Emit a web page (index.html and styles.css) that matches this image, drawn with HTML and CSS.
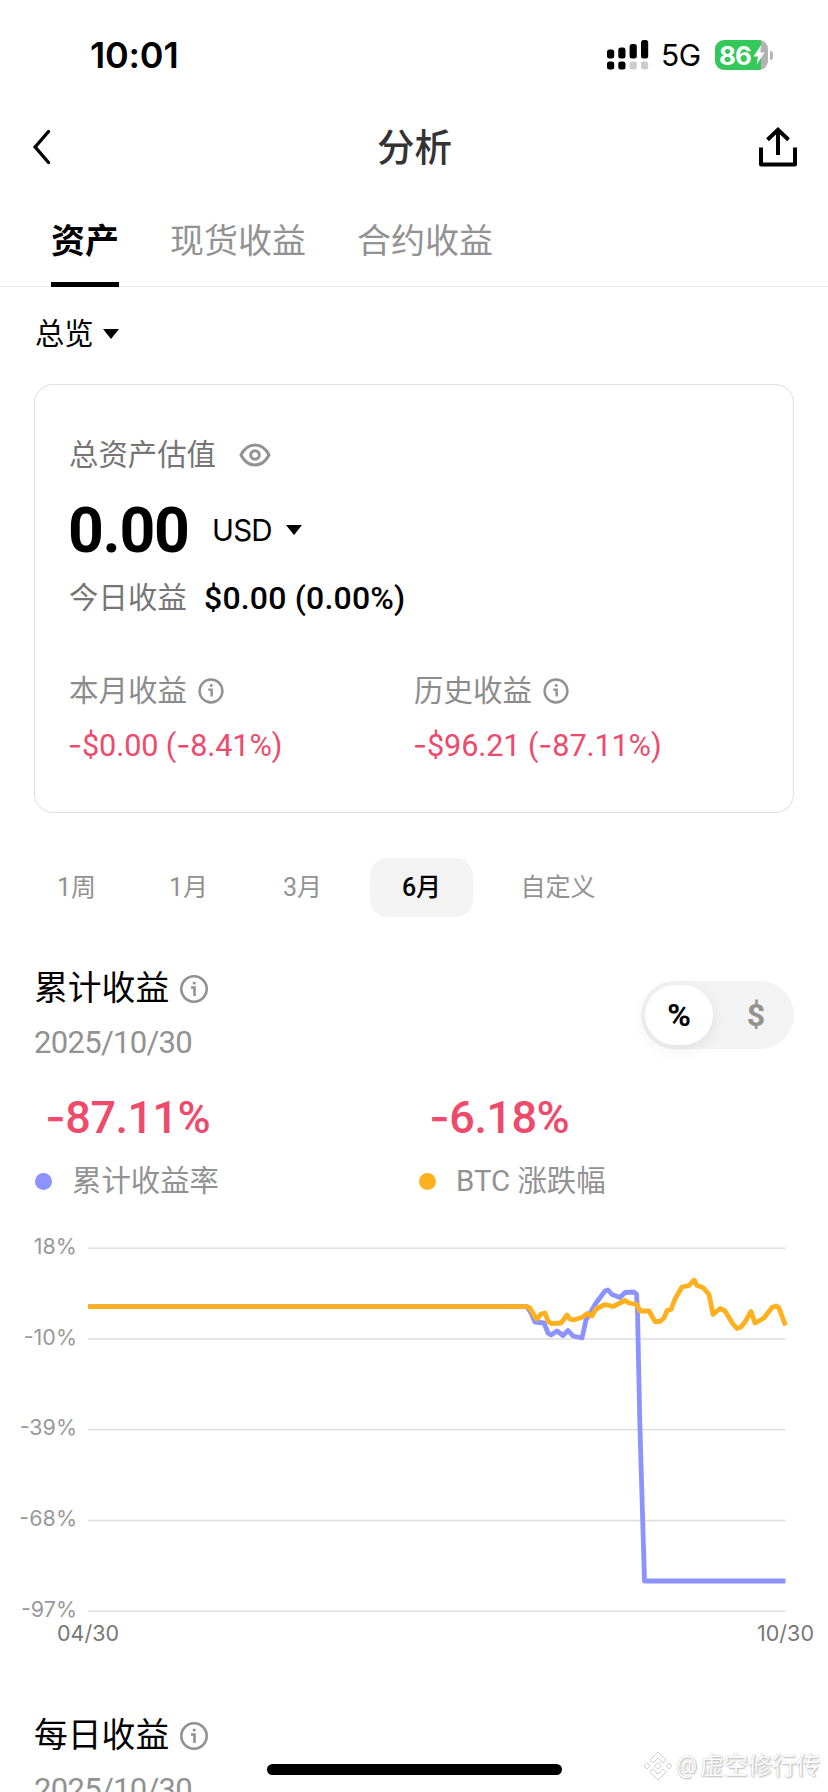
FILE: index.html
```html
<!DOCTYPE html>
<html lang="zh-CN">
<head>
  <meta charset="UTF-8" />
  <meta name="viewport" content="width=device-width, initial-scale=1.0"/>
  <title>分析</title>
  <link rel="stylesheet" href="styles.css">
</head>
<body>

  <!-- Status bar -->
  <div class="status-bar">
    <div class="clock">10:01</div>
    <div class="status-icons">
      <svg class="signal" width="42" height="30" viewBox="0 0 42 30">
        <rect x="0" y="9.5" width="7.2" height="9" rx="2.5"/>
        <rect x="11.3" y="7.5" width="7.2" height="11" rx="2.5"/>
        <rect x="22.6" y="4" width="7.2" height="14.5" rx="2.5"/>
        <rect x="34" y="0" width="7.2" height="18.5" rx="2.5"/>
        <rect x="0" y="21.5" width="7.2" height="8" rx="2.5"/>
        <rect x="11.3" y="21.5" width="7.2" height="8" rx="2.5"/>
        <rect x="22.6" y="21.5" width="7.2" height="8" rx="2.5" fill="#ccc"/>
        <rect x="34" y="21.5" width="7.2" height="8" rx="2.5" fill="#ccc"/>
      </svg>
      <span class="network">5G</span>
      <div class="battery">
        <span>86</span>
        <svg width="12" height="20" viewBox="0 0 12 20"><path d="M8 0 0.5 11.5H5L3.5 20 11.5 7.5H7.5Z" fill="#fff"/></svg>
      </div>
      <div class="battery-cap"></div>
    </div>
  </div>

  <!-- Header -->
  <div class="header">
    <svg width="20" height="36" viewBox="0 0 20 36"><path d="M16.5 2.5 3.2 18 16.5 33.5" fill="none" stroke="#000" stroke-width="3.4" stroke-linecap="round" stroke-linejoin="miter"/></svg>
    <h1 class="header-title">分析</h1>
    <svg width="38" height="40" viewBox="0 0 38 40">
      <path d="M2 20.5V37.5H36V20.5" fill="none" stroke="#000" stroke-width="4" stroke-linejoin="round"/>
      <path d="M19 28V3M8.5 12.8 19 2.8 29.5 12.8" fill="none" stroke="#000" stroke-width="4"/>
    </svg>
  </div>

  <div class="tabs">
    <div class="tab active">资产</div>
    <div class="tab">现货收益</div>
    <div class="tab">合约收益</div>
  </div>

  <div class="overview">总览<span class="arrow"></span></div>

  <!-- Asset card -->
  <div class="card">
    <div class="card-label">
      总资产估值
      <svg width="32" height="24" viewBox="0 0 32 24" fill="none" stroke="#929292" stroke-width="3">
        <path d="M2 12C5 6 10 2 16 2s11 4 14 10c-3 6-8 10-14 10S5 18 2 12Z" stroke-linejoin="round"/>
        <circle cx="16" cy="12" r="4.3"/>
      </svg>
    </div>
    <div class="balance">
      <span class="amount">0.00</span>
      <span class="currency">USD</span>
      <span class="arrow"></span>
    </div>
    <div class="today"><span class="today-label">今日收益</span>$0.00 (0.00%)</div>
    <div class="profit-row">
      <div class="profit">
        <div class="profit-label">本月收益
          <svg class="info" width="26" height="26" viewBox="0 0 28 28"><circle cx="14" cy="14" r="12.3"/><path d="M11 12.5h3.7V20"/><circle class="info-dot" cx="14.3" cy="8" r="1.6"/></svg>
        </div>
        <div class="profit-value"><span class="minus">-</span>$0.00 (<span class="minus">-</span>8.41%)</div>
      </div>
      <div class="profit">
        <div class="profit-label">历史收益
          <svg class="info" width="26" height="26" viewBox="0 0 28 28"><circle cx="14" cy="14" r="12.3"/><path d="M11 12.5h3.7V20"/><circle class="info-dot" cx="14.3" cy="8" r="1.6"/></svg>
        </div>
        <div class="profit-value"><span class="minus">-</span>$96.21 (<span class="minus">-</span>87.11%)</div>
      </div>
    </div>
  </div>

  <div class="periods">
    <div class="period narrow">1周</div>
    <div class="period narrow">1月</div>
    <div class="period">3月</div>
    <div class="period active">6月</div>
    <div class="period wide">自定义</div>
  </div>

  <!-- Cumulative profit -->
  <div class="section-head">
    <div>
      <div class="section-title">累计收益
        <svg class="info" width="28" height="28" viewBox="0 0 28 28"><circle cx="14" cy="14" r="12.7"/><path d="M11 12.5h3.5V21"/><circle class="info-dot" cx="14.2" cy="8" r="1.6"/></svg>
      </div>
      <div class="section-date">2025/10/30</div>
    </div>
    <div class="switch">
      <div class="switch-item on">%</div>
      <div class="switch-item">$</div>
    </div>
  </div>

  <div class="stats">
    <div class="stat">
      <div class="stat-value"><span class="minus">-</span>87.11%</div>
      <div class="stat-label"><span class="dot purple"></span>累计收益率</div>
    </div>
    <div class="stat">
      <div class="stat-value"><span class="minus">-</span>6.18%</div>
      <div class="stat-label"><span class="dot orange"></span>BTC 涨跌幅</div>
    </div>
  </div>

  <svg class="chart" width="828" height="430" viewBox="0 0 828 430">
    <g class="grid">
      <path d="M88 28.2H785.5M88 119H785.5M88 209.7H785.5M88 300.5H785.5M88 391.2H785.5"/>
    </g>
    <g class="y-axis">
      <text x="77" y="34">18%</text>
      <text x="77" y="124.7">-10%</text>
      <text x="77" y="215.3">-39%</text>
      <text x="77" y="305.9">-68%</text>
      <text x="77" y="397">-97%</text>
    </g>
    <g class="x-axis">
      <text x="88" y="420.6">04/30</text>
      <text x="785.5" y="420.6">10/30</text>
    </g>
    <polyline class="line" stroke="#8c93ff" points="88,86.7 527,86.7 531,93 535,102 544,103 548,113 551,115 557,111 563,115.5 568,110.5 573,116 582,118 586,100 596,83 605,71 608,70 612,74.5 620,77.5 625,72.5 634,72 636.5,74 637.5,90 638.7,150 640,210 642.7,300.5 644.5,361 785.5,361"/>
    <polyline class="line" stroke="#ffb01e" points="88,86.7 527,86.7 530,88 535,97 537,99 541,94 545,93 548,101 551,103.5 561,103 567,95 570,99 573,100 582,97.5 587,93.5 592,96 596,89 605,84.5 613,86.5 620,83 625,80.5 629,83 637,84.5 640,91 649,91 655,101.5 660,101.5 664,98 667,90.5 671,89.5 675,79 682,67 689,65.5 694,60 697,65.5 703,67.5 709,74.5 713,94.5 720,88.5 725,91 733,104 737,108.5 741,107 745,102 751,91.5 755,103 764,98 772,87.5 776,86 779,88 785.5,105.5"/>
  </svg>

  <!-- Daily profit -->
  <div class="section-head daily">
    <div>
      <div class="section-title">每日收益
        <svg class="info" width="28" height="28" viewBox="0 0 28 28"><circle cx="14" cy="14" r="12.7"/><path d="M11 12.5h3.5V21"/><circle class="info-dot" cx="14.2" cy="8" r="1.6"/></svg>
      </div>
      <div class="section-date">2025/10/30</div>
    </div>
  </div>

  <div class="home-indicator"></div>
  <div class="watermark">
    <svg width="30" height="30" viewBox="0 0 30 30" fill="#fff" stroke="#d0d0d0" stroke-width="1">
      <path d="M15 1 23 9 20 12 15 7 10 12 7 9Z"/>
      <path d="M15 29 23 21 20 18 15 23 10 18 7 21Z"/>
      <path d="M15 11.5 18.5 15 15 18.5 11.5 15Z"/>
      <path d="M4 12 7 15 4 18 1 15Z"/>
      <path d="M26 12 29 15 26 18 23 15Z"/>
    </svg>
    <span class="at">@</span>
    <span>虚空修行传</span>
  </div>

</body>
</html>
```

FILE: styles.css
```css
* {
  box-sizing: border-box;
}

body {
  margin: 0;
  width: 828px;
  height: 1792px;
  overflow: hidden;
  position: relative;
  background: #fff;
  color: #000;
  font-family: Roboto, "Noto Sans CJK SC", sans-serif;
}

svg {
  display: block;
  flex-shrink: 0;
}

/* status bar */
.status-bar {
  height: 110px;
  padding: 0 55px 0 90px;
  display: flex;
  justify-content: space-between;
  align-items: center;
  font-family: Inter, sans-serif;
}

.clock {
  font-size: 36px;
  font-weight: 600;
  letter-spacing: -0.2px;
}

.status-icons {
  display: flex;
  align-items: center;
}

.network {
  margin-left: 12px;
  width: 54px;
  font-size: 30px;
  line-height: 30px;
  letter-spacing: -0.5px;
}

.battery {
  width: 53px;
  height: 30px;
  border-radius: 9px;
  background: linear-gradient(to right, #34c759 46px, #b3b3b3 46px);
  color: #fff;
  font-size: 26px;
  font-weight: 700;
  display: flex;
  align-items: center;
  padding-left: 4px;
}

.battery span {
  width: 34px;
  letter-spacing: -1px;
}

.battery-cap {
  width: 3px;
  height: 9px;
  margin-left: 2px;
  border-radius: 0 4px 4px 0;
  background: #b3b3b3;
}

/* header */
.header {
  height: 74px;
  padding: 0 31px 0 32px;
  display: flex;
  justify-content: space-between;
  align-items: center;
}

.header-title {
  margin: 1px 0 0 18px;
  color: #333;
  font-size: 37.5px;
  font-weight: 500;
  line-height: 48px;
}

.tabs {
  height: 103px;
  padding: 14px 51px 0;
  display: flex;
  gap: 51px;
  border-bottom: 1px solid #e8e8e8;
}

.tab {
  height: 89px;
  border-bottom: 5px solid transparent;
  color: #929292;
  font-size: 34px;
  line-height: 86px;
}

.tab.active {
  border-color: #000;
  color: #000;
  font-weight: 700;
}

.overview {
  height: 97px;
  padding-left: 35px;
  display: flex;
  align-items: center;
  font-size: 29.3px;
  line-height: 40px;
  padding-bottom: 4px;
}

.arrow {
  margin-left: 9px;
  border: 8px solid transparent;
  border-top: 10px solid #000;
  border-bottom: 0;
}

/* asset card */
.card {
  height: 429px;
  margin: 0 34px;
  padding: 50px 34px 0;
  border: 1px solid #dedede;
  border-radius: 19px;
}

.card-label {
  height: 40px;
  display: flex;
  align-items: center;
  gap: 23px;
  color: #757575;
  font-size: 29.4px;
  line-height: 40px;
}

.balance {
  height: 70px;
  margin-top: 20px;
  display: flex;
  align-items: center;
}

.amount {
  width: 144px;
  margin-left: -1px;
  padding-top: 2px;
  font-size: 62.5px;
  font-weight: 700;
  line-height: 70px;
  letter-spacing: -1.3px;
}

.currency {
  width: 65px;
  font-family: Inter, sans-serif;
  font-size: 29.5px;
  letter-spacing: -0.8px;
}

.today {
  margin-top: 12px;
  font-size: 32px;
  font-weight: 500;
  line-height: 40px;
  letter-spacing: 0.2px;
  display: flex;
  align-items: center;
}

.today-label {
  width: 135px;
  padding-top: 1px;
  color: #757575;
  font-size: 29.3px;
  font-weight: 400;
}

.profit-row {
  margin-top: 53px;
  display: flex;
}

.profit {
  width: 346px;
}

.profit-label {
  display: flex;
  align-items: center;
  gap: 11px;
  color: #8c8c8c;
  font-size: 29.5px;
  line-height: 40px;
}

.profit-value {
  margin-top: 14px;
  margin-left: -1px;
  color: #ee4a6c;
  font-size: 30.6px;
  line-height: 40px;
  letter-spacing: -0.1px;
  white-space: nowrap;
}

.minus {
  font-family: Inter, sans-serif;
}

.info {
  fill: none;
  stroke: #929292;
  stroke-width: 2.6;
}

.info-dot {
  fill: #929292;
  stroke: none;
}

/* period picker */
.periods {
  margin: 45px 0 0 27px;
  display: flex;
  gap: 16px;
}

.period {
  width: 103px;
  height: 59px;
  border-radius: 18px;
  color: #929292;
  font-size: 25px;
  line-height: 60px;
  text-align: center;
}

.period.narrow {
  width: 96px;
  padding-left: 3px;
}

.period.wide {
  width: 138px;
}

.period.active {
  background: #f3f3f3;
  color: #000;
  font-weight: 500;
}

/* profit sections */
.section-head {
  height: 127px;
  padding: 48px 34px 0;
  display: flex;
  justify-content: space-between;
}

.section-title {
  display: flex;
  align-items: center;
  gap: 11px;
  font-size: 33.8px;
  line-height: 48px;
}

.section-date {
  margin-top: 9px;
  color: #929292;
  font-size: 31px;
  line-height: 42px;
  letter-spacing: -0.7px;
}

.switch {
  width: 153px;
  height: 68px;
  margin-top: 16px;
  padding: 4px;
  border-radius: 34px;
  background: #f3f3f3;
  display: flex;
}

.switch-item {
  width: 68px;
  height: 60px;
  border-radius: 30px;
  color: #929292;
  font-size: 32px;
  font-weight: 700;
  line-height: 60px;
  text-align: center;
}

.switch-item + .switch-item {
  margin-left: 9px;
}

.switch-item.on {
  background: #fff;
  color: #000;
  box-shadow: 0 4px 16px rgba(0, 0, 0, 0.08);
}

.stats {
  height: 176px;
  padding: 45px 0 0 35px;
  display: flex;
}

.stat {
  width: 384px;
}

.stat-value {
  padding-left: 10px;
  color: #ee4a6c;
  font-size: 45px;
  font-weight: 500;
  line-height: 56px;
  letter-spacing: -0.5px;
}

.stat-label {
  margin-top: 14px;
  display: flex;
  align-items: center;
  color: #929292;
  font-size: 29.4px;
  line-height: 42px;
}

.dot {
  width: 17px;
  height: 17px;
  margin-right: 20px;
  border-radius: 50%;
}

.dot.purple {
  background: #8c93ff;
}

.dot.orange {
  background: #ffb01e;
}

.chart {
  font-family: Inter, sans-serif;
  font-size: 21.5px;
}

.grid {
  stroke: #dedede;
  stroke-width: 1.5;
}

.y-axis {
  fill: #999;
  text-anchor: end;
}

.x-axis {
  fill: #777;
  text-anchor: middle;
}

.line {
  fill: none;
  stroke-width: 4.8;
  stroke-linejoin: round;
}

.daily {
  padding-top: 62px;
}

/* floating over the page */
.home-indicator {
  position: absolute;
  left: 267px;
  top: 1764px;
  width: 295px;
  height: 11px;
  border-radius: 6px;
  background: #000;
}

.watermark {
  position: absolute;
  right: 8px;
  top: 1750px;
  display: flex;
  align-items: center;
  gap: 3px;
  color: #fff;
  font-size: 24px;
  line-height: 32px;
  text-shadow: 0 0 1px #aaa, 1px 1px 2px #b4b4b4;
}

.at {
  font-size: 23px;
}
```
